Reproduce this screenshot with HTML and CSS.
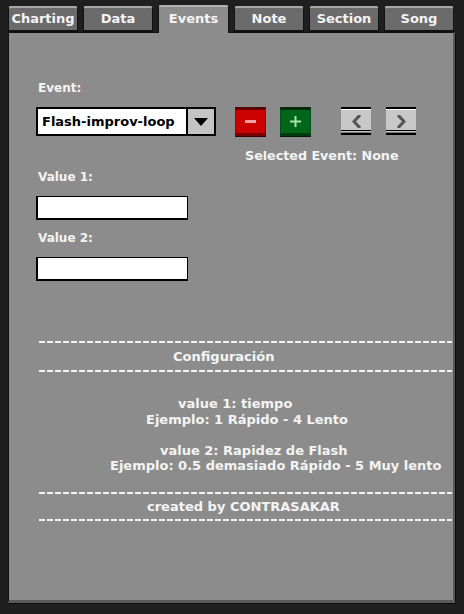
FILE: index.html
```html
<!DOCTYPE html>
<html>
<head>
<meta charset="utf-8">
<link rel="stylesheet" href="styles.css">
</head>
<body>
<div class="window">
  <div class="tabs">
    <div class="tab">Charting</div>
    <div class="tab">Data</div>
    <div class="tab active">Events</div>
    <div class="tab">Note</div>
    <div class="tab">Section</div>
    <div class="tab">Song</div>
  </div>
  <div class="panel">
    <div class="label first">Event:</div>
    <div class="event-row">
      <div class="dropdown">
        <div class="dd-text">Flash-improv-loop</div>
        <div class="dd-btn"><svg width="14" height="8" viewBox="0 0 14 8"><path d="M0 0h14L7 8z" fill="#000"/></svg></div>
      </div>
      <div class="btn red"><svg width="11" height="3" viewBox="0 0 11 3"><rect width="11" height="3" fill="#f2a0a0"/></svg></div>
      <div class="btn green"><svg width="11" height="11" viewBox="0 0 11 11"><path d="M4.5 0h2v4.5H11v2H6.5V11h-2V6.5H0v-2h4.5z" fill="#a8e4a8"/></svg></div>
      <div class="nav prev"><svg width="9" height="13" viewBox="0 0 9 13"><path d="M8 0L2 6.5 8 13" fill="none" stroke="#555" stroke-width="3"/></svg></div>
      <div class="nav next"><svg width="9" height="13" viewBox="0 0 9 13"><path d="M1 0l6 6.5L1 13" fill="none" stroke="#555" stroke-width="3"/></svg></div>
    </div>
    <div class="selected">Selected Event: None</div>
    <div class="label v1">Value 1:</div>
    <div class="input"></div>
    <div class="label v2">Value 2:</div>
    <div class="input"></div>
    <div class="dashes d1"></div>
    <div class="line l-config">Configuración</div>
    <div class="dashes d2"></div>
    <div class="info">
      <div class="line l-v1">value 1: tiempo</div>
      <div class="line l-e1">Ejemplo: 1 Rápido - 4 Lento</div>
      <div class="line l-v2">value 2: Rapidez de Flash</div>
      <div class="line l-e2">Ejemplo: 0.5 demasiado Rápido - 5 Muy lento</div>
    </div>
    <div class="dashes d3"></div>
    <div class="line l-credit">created by CONTRASAKAR</div>
    <div class="dashes d4"></div>
  </div>
</div>
</body>
</html>
```

FILE: styles.css
```css
html, body {
  margin: 0;
  padding: 0;
  background: #1f1f1f;
  width: 464px;
  height: 614px;
  overflow: hidden;
}
body {
  font-family: "DejaVu Sans", "Liberation Sans", sans-serif;
  font-weight: bold;
  color: #f4f4f4;
}
.window {
  padding: 5px 0 0 8px;
  width: 447px;
}
.tabs {
  display: flex;
  gap: 5px;
  height: 27px;
  align-items: flex-end;
}
.tab {
  box-sizing: border-box;
  width: 70px;
  height: 26px;
  background: #6b6b6b;
  border: 1px solid #111;
  border-top: 2px solid #a8a8a8;
  border-bottom: 2px solid #111;
  border-radius: 3px 3px 0 0;
  font-size: 13px;
  line-height: 22px;
  text-align: center;
  color: #f4f4f4;
}
.tab.active {
  width: 71px;
  height: 28px;
  background: #8c8c8c;
  border-top: 2px solid #b0b0b0;
  border-bottom: none;
  line-height: 24px;
  position: relative;
  z-index: 1;
  margin-bottom: -1px;
}
.panel {
  box-sizing: border-box;
  width: 447px;
  height: 571px;
  background: #8c8c8c;
  border-left: 1px solid #111;
  border-top: 1px solid #111;
  border-right: 2px solid #5a5a5a;
  border-bottom: 3px solid #5a5a5a;
  padding: 0 0 0 27px;
  box-shadow: 1px 1px 0 #0a0a0a;
}
.label {
  font-size: 12px;
  line-height: 14px;
  padding-left: 2px;
}
.label.first { margin-top: 48px; }
.event-row {
  display: flex;
  align-items: flex-start;
  margin-top: 12px;
  height: 29px;
}
.dropdown {
  display: flex;
  box-sizing: border-box;
  width: 180px;
  height: 29px;
  border: 2px solid #000;
  background: #fff;
}
.dd-text {
  flex: 1;
  color: #000;
  font-size: 13px;
  line-height: 25px;
  padding-left: 4px;
  white-space: nowrap;
  overflow: hidden;
}
.dd-btn {
  width: 26px;
  background: #c4c4c4;
  border-left: 2px solid #000;
  display: flex;
  align-items: center;
  justify-content: center;
}
.btn {
  box-sizing: border-box;
  width: 31px;
  height: 29px;
  display: flex;
  align-items: center;
  justify-content: center;
}
.btn.red {
  margin-left: 19px;
  background: #cc0000;
  border-top: 3px solid #5c0000;
  border-bottom: 3px solid #7a0000;
  border-left: 1px solid #a00000;
  border-right: 1px solid #a00000;
  box-shadow: 0 1px 0 #3a0000;
}
.btn.green {
  margin-left: 14px;
  background: #00661a;
  border-top: 3px solid #002a08;
  border-bottom: 3px solid #003a10;
  border-left: 1px solid #00501a;
  border-right: 1px solid #00501a;
  box-shadow: 0 1px 0 #001a05;
}
.nav {
  box-sizing: border-box;
  width: 30px;
  height: 28px;
  background: #c8c8c8;
  border-top: 2px solid #000;
  border-bottom: 2px solid #000;
  box-shadow: inset 0 1px 0 #ffffff, inset 0 -1px 0 #777, inset 0 -2px 0 #c8c8c8, inset 0 -3px 0 #000;
  display: flex;
  align-items: center;
  justify-content: center;
}
.nav.prev { margin-left: 30px; }
.nav.next { margin-left: 15px; }
.selected {
  font-size: 12.7px;
  line-height: 14px;
  margin-top: 13px;
  padding-left: 209px;
}
.label.v1 { margin-top: 7px; }
.label.v2 { margin-top: 11px; }
.input {
  box-sizing: border-box;
  width: 152px;
  height: 24px;
  background: #fff;
  border: 2px solid #000;
  border-top-width: 1px;
  border-right-width: 1px;
  margin-top: 12px;
}
.dashes {
  width: 413px;
  height: 2px;
  margin-left: 3px;
  background: repeating-linear-gradient(90deg, #f4f4f4 0 6px, transparent 6px 8px);
}
.d1 { margin-top: 60px; }
.d2 { margin-top: 6px; }
.d3 { margin-top: 18px; }
.d4 { margin-top: 5px; }
.line {
  font-size: 13px;
  line-height: 15px;
  white-space: nowrap;
}
.l-config { margin-top: 6px; padding-left: 137px; }
.info {
  margin-top: 24px;
  display: flex;
  flex-direction: column;
}
.info .line { line-height: 15.5px; }
.l-v1 { padding-left: 142px; }
.l-e1 { padding-left: 110px; }
.l-v2 { padding-left: 124px; margin-top: 15.5px; }
.l-e2 { padding-left: 74px; }
.l-credit { margin-top: 5px; padding-left: 111px; }
```
